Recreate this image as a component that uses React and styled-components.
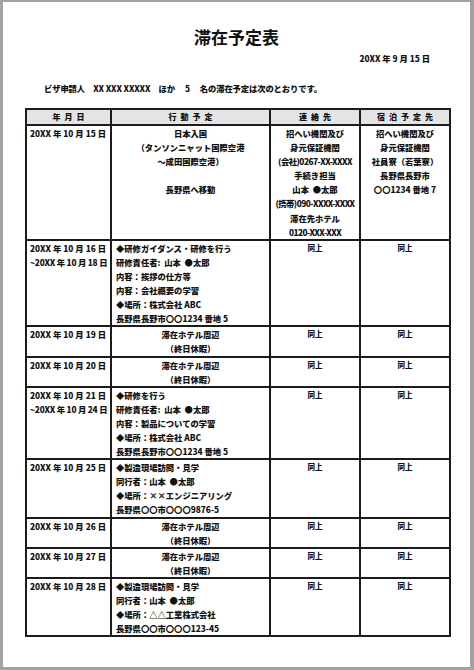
import React from "react";
import styled, { createGlobalStyle } from "styled-components";

const GlobalStyle = createGlobalStyle`
  html, body {
    margin: 0;
    padding: 0;
    background: #a2a2a2;
  }
  body {
    font-family: "Noto Sans CJK JP", "Noto Sans", sans-serif;
    color: #111;
  }
`;

const Frame = styled.div`
  margin: 2px 4px 3px 3px;
  height: 665px;
  background: #ffffff;
  box-sizing: border-box;
  padding: 25px 22px 0 22px;
`;

const Title = styled.h1`
  margin: 0;
  text-align: center;
  font-size: 17px;
  line-height: 20px;
  font-weight: 700;
`;

const DateLine = styled.div`
  margin-top: 5px;
  padding-right: 18px;
  text-align: right;
  font-size: 8.3px;
  line-height: 12px;
  font-weight: 900;
  white-space: pre;
`;

const Intro = styled.p`
  margin: 18px 0 0 0;
  padding-left: 19px;
  font-size: 8.3px;
  line-height: 12px;
  font-weight: 900;
  white-space: pre;
  letter-spacing: -0.1px;
`;

const Table = styled.table`
  margin-top: 14px;
  width: 424px;
  border-collapse: collapse;
  table-layout: fixed;
  border: 2px solid #1c1c1c;
`;

const HeadCell = styled.th`
  height: 14px;
  padding: 0;
  background: #e4e4e4;
  border: 2px solid #1c1c1c;
  font-size: 8px;
  line-height: 14px;
  font-weight: 900;
  letter-spacing: 4px;
  text-indent: 4px;
  text-align: center;
`;

const Cell = styled.td`
  padding: ${(p) => (p.$align === "left" ? "0 2px 0 4px" : "0")};
  border: 2px solid #1c1c1c;
  vertical-align: top;
  text-align: ${(p) => p.$align};
  font-size: 8.3px;
  line-height: 14.1px;
  font-weight: 900;
`;

const DateCell = styled.td`
  padding: 0 4px 0 3px;
  border: 2px solid #1c1c1c;
  vertical-align: top;
  font-size: 8.3px;
  line-height: 14.1px;
  font-weight: 900;
`;

const DateText = styled.div`
  white-space: nowrap;
  text-align: justify;
  text-align-last: justify;
  letter-spacing: ${(p) => (p.$tight ? "-0.2px" : "0")};
`;

const Line = styled.div`
  white-space: pre;
  letter-spacing: ${(p) => (p.$tight ? "-0.5px" : "0")};
`;

const Same = styled.div`
  font-size: 7.5px;
  line-height: 14.1px;
`;

const contact = [
  "招へい機関及び",
  "身元保証機関",
  "(会社)0267-XX-XXXX",
  "手続き担当",
  "山本  ●太郎",
  "(携帯)090-XXXX-XXXX",
  "滞在先ホテル",
  "0120-XXX-XXX",
];

const stay = [
  "招へい機関及び",
  "身元保証機関",
  "社員寮（若葉寮）",
  "長野県長野市",
  "〇〇1234 番地 7",
];

const rest = ["滞在ホテル周辺", "（終日休暇）"];

const rows = [
  {
    date: ["20XX 年 10 月 15 日"],
    plan: ["日本入国", "（タンソンニャット国際空港", "～成田国際空港）", " ", "長野県へ移動"],
    align: "center",
    contact,
    stay,
  },
  {
    date: ["20XX 年 10 月 16 日", "~20XX 年 10 月 18 日"],
    plan: [
      "◆研修ガイダンス・研修を行う",
      "研修責任者:  山本  ●太郎",
      "内容：挨拶の仕方等",
      "内容：会社概要の学習",
      "◆場所：株式会社 ABC",
      "長野県長野市〇〇1234 番地 5",
    ],
    align: "left",
  },
  { date: ["20XX 年 10 月 19 日"], plan: rest, align: "center" },
  { date: ["20XX 年 10 月 20 日"], plan: rest, align: "center" },
  {
    date: ["20XX 年 10 月 21 日", "~20XX 年 10 月 24 日"],
    plan: [
      "◆研修を行う",
      "研修責任者:  山本  ●太郎",
      "内容：製品についての学習",
      "◆場所：株式会社 ABC",
      "長野県長野市〇〇1234 番地 5",
    ],
    align: "left",
  },
  {
    date: ["20XX 年 10 月 25 日"],
    plan: [
      "◆製造現場訪問・見学",
      "同行者：山本  ●太郎",
      "◆場所：××エンジニアリング",
      "長野県〇〇市〇〇〇9876-5",
    ],
    align: "left",
  },
  { date: ["20XX 年 10 月 26 日"], plan: rest, align: "center" },
  { date: ["20XX 年 10 月 27 日"], plan: rest, align: "center" },
  {
    date: ["20XX 年 10 月 28 日"],
    plan: [
      "◆製造現場訪問・見学",
      "同行者：山本  ●太郎",
      "◆場所：△△工業株式会社",
      "長野県〇〇市〇〇〇123-45",
    ],
    align: "left",
  },
];

const Lines = ({ items }) =>
  items.map((t, i) => (
    <Line key={i} $tight={/X{3}/.test(t)}>
      {t}
    </Line>
  ));

const App = () => {
  return (
    <>
      <GlobalStyle />
      <Frame>
        <Title>滞在予定表</Title>
        <DateLine>20XX 年 9 月 15 日</DateLine>
        <Intro>ビザ申請人　XX XXX XXXXX　ほか　 5 　名の滞在予定は次のとおりです。</Intro>
        <Table>
          <colgroup>
            <col style={{ width: 85 }} />
            <col style={{ width: 159 }} />
            <col style={{ width: 90 }} />
            <col style={{ width: 90 }} />
          </colgroup>
          <thead>
            <tr>
              <HeadCell>年月日</HeadCell>
              <HeadCell>行動予定</HeadCell>
              <HeadCell>連絡先</HeadCell>
              <HeadCell>宿泊予定先</HeadCell>
            </tr>
          </thead>
          <tbody>
            {rows.map((r, i) => (
              <tr key={i}>
                <DateCell>
                  {r.date.map((d, j) => (
                    <DateText key={j} $tight={d.startsWith("~")}>
                      {d}
                    </DateText>
                  ))}
                </DateCell>
                <Cell $align={r.align}>
                  <Lines items={r.plan} />
                </Cell>
                <Cell $align="center">
                  {r.contact ? <Lines items={r.contact} /> : <Same>同上</Same>}
                </Cell>
                <Cell $align="center">
                  {r.stay ? <Lines items={r.stay} /> : <Same>同上</Same>}
                </Cell>
              </tr>
            ))}
          </tbody>
        </Table>
      </Frame>
    </>
  );
};

export default App;
